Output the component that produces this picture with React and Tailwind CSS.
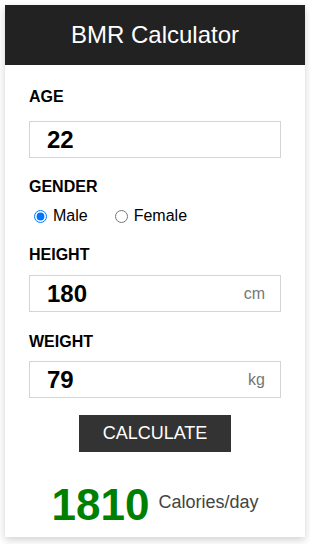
import { useState } from 'react';

const font = { fontFamily: '"Liberation Sans", Arial, sans-serif' };

function NumberField({ value, unit }) {
  return (
    <div className="flex items-center h-[37px] border border-[#d4d4d4] bg-white pl-[17px] pr-[15px]">
      <input
        className="flex-1 min-w-0 outline-none bg-transparent text-[24px] font-bold text-black"
        defaultValue={value}
        style={font}
      />
      {unit && <span className="text-[16px] text-[#777] leading-none">{unit}</span>}
    </div>
  );
}

export default function App() {
  const [gender, setGender] = useState('male');

  return (
    <div className="min-h-screen bg-white p-[5px]" style={font}>
      <div className="w-[300px] bg-white shadow-[0_3px_8px_rgba(0,0,0,0.18)]">
        {/* Header */}
        <div className="h-[60px] bg-[#222] flex items-center justify-center">
          <h1 className="text-white text-[24px] font-normal">BMR Calculator</h1>
        </div>

        <div className="px-[24px] pt-[23px] pb-[11px]">
          <div className="text-[16px] leading-[18px] font-bold text-black">AGE</div>
          <div className="mt-[15px]">
            <NumberField value="22" />
          </div>

          <div className="mt-[20px] text-[16px] leading-[18px] font-bold text-black">GENDER</div>
          <div className="mt-[10px] flex items-center h-[20px] text-[16px] text-black">
            <label className="flex items-center">
              <input
                type="radio"
                name="gender"
                className="w-[13px] h-[13px] ml-[5px] mr-[6px] m-0"
                checked={gender === 'male'}
                onChange={() => setGender('male')}
              />
              Male
            </label>
            <label className="flex items-center ml-[27px]">
              <input
                type="radio"
                name="gender"
                className="w-[13px] h-[13px] mr-[6px] m-0"
                checked={gender === 'female'}
                onChange={() => setGender('female')}
              />
              Female
            </label>
          </div>

          <div className="mt-[20px] text-[16px] leading-[18px] font-bold text-black">HEIGHT</div>
          <div className="mt-[11px]">
            <NumberField value="180" unit="cm" />
          </div>

          <div className="mt-[21px] text-[16px] leading-[18px] font-bold text-black">WEIGHT</div>
          <div className="mt-[10px]">
            <NumberField value="79" unit="kg" />
          </div>

          <div className="mt-[17px] flex justify-center">
            <button className="h-[37px] w-[152px] bg-[#333] text-white text-[18px] uppercase">
              Calculate
            </button>
          </div>

          {/* Result */}
          <div className="mt-[32px] flex justify-center items-start gap-[9px]">
            <span className="text-[44px] leading-[42px] font-bold text-[#008000]">1810</span>
            <span className="mt-[8px] text-[18px] leading-[20px] text-[#444]">Calories/day</span>
          </div>
        </div>
      </div>
    </div>
  );
}
